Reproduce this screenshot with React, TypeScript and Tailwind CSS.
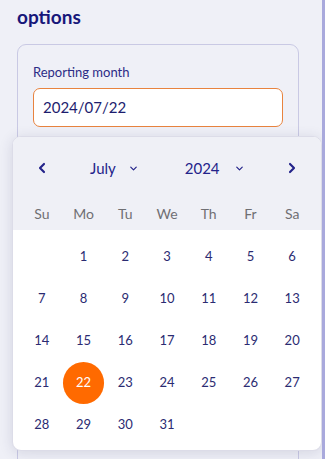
import { ChevronLeft, ChevronRight, ChevronDown } from 'lucide-react';

const weekDays = ['Su', 'Mo', 'Tu', 'We', 'Th', 'Fr', 'Sa'];

// July 2024 starts on a Monday
const cells: (number | null)[] = [null, ...Array.from({ length: 31 }, (_, i) => i + 1)];

function DatePopover() {
  const selected = 22;
  return (
    <div className="absolute left-[12px] top-[136px] w-[310px] h-[315px] rounded-[9px] border border-[#dcdce8] bg-white shadow-[0_2px_14px_rgba(40,40,90,0.14)] overflow-hidden">
      {/* header */}
      <div className="bg-[#eff0f6] h-[93px] px-[8px]">
        <div className="flex items-center h-[62px] text-[#23238a]">
          <button className="w-[42px] flex justify-center">
            <ChevronLeft size={16} strokeWidth={3.2} />
          </button>
          <button className="ml-[27px] flex items-center gap-[12px] text-[15px]">
            <span>July</span>
            <ChevronDown size={11} strokeWidth={2.6} className="mt-[1px]" />
          </button>
          <button className="ml-[46px] flex items-center gap-[14px] text-[15px]">
            <span>2024</span>
            <ChevronDown size={11} strokeWidth={2.6} className="mt-[1px]" />
          </button>
          <button className="ml-auto w-[42px] flex justify-center">
            <ChevronRight size={16} strokeWidth={3.2} />
          </button>
        </div>
        <div className="grid grid-cols-7 h-[31px] pt-[5px] items-start">
          {weekDays.map((d) => (
            <div key={d} className="text-center text-[14px] text-[#6f6f73] leading-[20px]">
              {d}
            </div>
          ))}
        </div>
      </div>
      {/* days */}
      <div className="grid grid-cols-7 px-[8px] pt-[6px]">
        {cells.map((n, i) => (
          <div key={i} className="h-[42px] flex items-center justify-center">
            {n !== null &&
              (n === selected ? (
                <span className="w-[42px] h-[42px] rounded-full bg-[#ff6a00] text-white flex items-center justify-center text-[13px]">
                  {n}
                </span>
              ) : (
                <span className="text-[13px] text-[#2b2b72]">{n}</span>
              ))}
          </div>
        ))}
      </div>
    </div>
  );
}

export default function App() {
  return (
    <div
      className="relative h-[459px] w-[325px] overflow-hidden bg-[#eff0f7] border-r-[3px] border-[#a9a9dc]"
      style={{ fontFamily: 'Lato, "Noto Sans", sans-serif' }}
    >
      <div className="px-[17px] pt-[4px]">
        <h2 className="text-[19px] font-bold text-[#17177a] leading-[26px]">options</h2>
        <div className="mt-[14px] w-[282px] h-[440px] rounded-[9px] border border-[#c9c9e4] bg-[#eff0f7] px-[15px] pt-[18px]">
          <label className="block text-[13px] text-[#2c2c86] leading-[18px]">Reporting month</label>
          <div className="mt-[7px] h-[39px] w-[250px] rounded-[7px] border border-[#e8833f] bg-white flex items-center px-[9px] text-[15px] text-[#1d1d6e]">
            2024/07/22
          </div>
          <div className="mt-[20px] h-[39px] w-[250px] rounded-[7px] bg-[#f4f5fa]" />
        </div>
      </div>
      <DatePopover />
    </div>
  );
}
